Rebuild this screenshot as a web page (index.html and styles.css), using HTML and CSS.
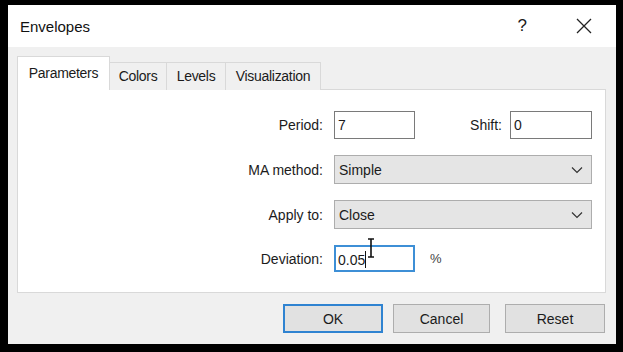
FILE: index.html
```html
<!DOCTYPE html>
<html lang="en">

<head>
	<meta charset="UTF-8">
	<meta name="viewport" content="width=device-width, initial-scale=1.0">
	<title>Envelopes</title>
	<link rel="stylesheet" href="styles.css">
</head>

<body>
	<div class="dialog">
		<div class="titlebar">
			<span class="title">Envelopes</span>
			<span class="help">?</span>
			<svg class="close" width="16" height="16" viewBox="0 0 16 16">
				<path d="M1 1 L15 15 M15 1 L1 15" stroke="#222" stroke-width="1.3" fill="none" />
			</svg>
		</div>

		<div class="content">
			<ul class="tabs">
				<li class="tab active">Parameters</li>
				<li class="tab tab-colors">Colors</li>
				<li class="tab tab-levels">Levels</li>
				<li class="tab tab-visu">Visualization</li>
			</ul>

			<div class="panel">
				<div class="form">
					<label class="lbl">Period:</label>
					<div class="field">7</div>
					<label class="lbl lbl-shift">Shift:</label>
					<div class="field">0</div>

					<label class="lbl">MA method:</label>
					<div class="select">
						<span>Simple</span>
						<svg width="12" height="8" viewBox="0 0 12 8"><path d="M1 1.5 L6 6.5 L11 1.5" stroke="#333" stroke-width="1.2" fill="none" /></svg>
					</div>

					<label class="lbl">Apply to:</label>
					<div class="select">
						<span>Close</span>
						<svg width="12" height="8" viewBox="0 0 12 8"><path d="M1 1.5 L6 6.5 L11 1.5" stroke="#333" stroke-width="1.2" fill="none" /></svg>
					</div>

					<label class="lbl">Deviation:</label>
					<div class="field focused">0.05<span class="caret"></span>
						<!-- curseur souris en forme de I -->
						<svg class="ibeam" width="8" height="20" viewBox="0 0 8 20">
							<path d="M1 1 H7 M4 1 V19 M1 19 H7" stroke="#111" stroke-width="1.6" fill="none" />
						</svg>
					</div>
					<span class="unit">%</span>
				</div>
			</div>

			<div class="buttons">
				<button class="btn default">OK</button>
				<button class="btn btn-cancel">Cancel</button>
				<button class="btn btn-reset">Reset</button>
			</div>
		</div>
	</div>
</body>

</html>
```

FILE: styles.css
```css
body {
	margin: 0;
	background: #000;
	font-family: "Liberation Sans", Arial, sans-serif;
	font-size: 14px;
	color: #1b1b1b;
}

.dialog {
	margin: 5px 0 0 8px;
	width: 608px;
	height: 339px;
	background: #f0f0f0;
	display: flex;
	flex-direction: column;
}

.titlebar {
	height: 42px;
	background: #fff;
	display: flex;
	align-items: center;
	padding: 0 0 0 12px;
}

.title {
	font-size: 15px;
	flex: 1;
	color: #111;
}

.help {
	font-size: 17px;
	margin-right: 49px;
}

.close {
	margin-right: 24px;
}

.content {
	padding: 10px 10px 0 9px;
}

.tabs {
	list-style-type: none;
	margin: 0;
	padding: 0;
	display: flex;
	align-items: flex-end;
	height: 33px;
	position: relative;
	z-index: 1;
}

.tab {
	height: 28px;
	box-sizing: border-box;
	padding-top: 5px;
	text-align: center;
	border: 1px solid #d9d9d9;
	border-left: none;
	border-bottom: none;
	background: #f0f0f0;
	font-size: 14px;
	letter-spacing: -0.3px;
}

.tab.active {
	width: 93px;
	height: 34px;
	padding-top: 8px;
	border-left: 1px solid #d9d9d9;
	background: #fff;
}

.tab-colors {
	width: 57px;
}

.tab-levels {
	width: 59px;
}

.tab-visu {
	width: 95px;
}

.panel {
	height: 204px;
	box-sizing: border-box;
	margin-top: -1px;
	background: #fff;
	border: 1px solid #d9d9d9;
	padding: 21px 13px 0 0;
}

.form {
	display: grid;
	grid-template-columns: 1fr 81px 95px 82px;
	grid-template-rows: 28px 29px 29px 27px;
	row-gap: 16px;
	align-items: center;
}

.form > .lbl {
	text-align: right;
	padding-right: 11px;
}

.form > .lbl-shift {
	padding-right: 8px;
}

.field {
	height: 100%;
	box-sizing: border-box;
	border: 1px solid #7a7a7a;
	background: #fff;
	padding: 5px 3px 0;
	position: relative;
}

.field.focused {
	border: 2px solid #3d8fd6;
	padding: 4px 2px 0;
}

.caret {
	display: inline-block;
	width: 1px;
	height: 17px;
	background: #111;
	vertical-align: -3px;
}

.ibeam {
	position: absolute;
	left: 31px;
	top: -9px;
}

.unit {
	padding-left: 15px;
	font-size: 13px;
	color: #444;
}

.select {
	grid-column: 2 / 5;
	height: 100%;
	box-sizing: border-box;
	border: 1px solid #adadad;
	background: #e5e5e5;
	display: flex;
	align-items: center;
	justify-content: space-between;
	padding: 0 8px 0 4px;
}

.buttons {
	display: flex;
	justify-content: flex-end;
	padding: 11px 1px 0 0;
}

.btn {
	width: 100px;
	height: 29px;
	font-family: "Liberation Sans", Arial, sans-serif;
	font-size: 14px;
	color: #1b1b1b;
	background: #e1e1e1;
	border: 1px solid #adadad;
	padding: 0;
}

.btn.default {
	border: 2px solid #2f83d1;
}

.btn-cancel {
	width: 97px;
	margin-left: 10px;
}

.btn-reset {
	margin-left: 15px;
}
```
